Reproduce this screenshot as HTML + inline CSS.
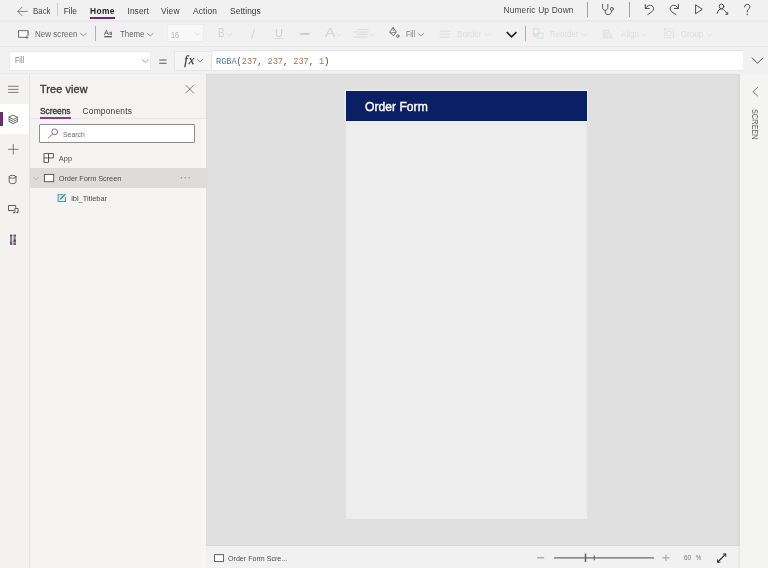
<!DOCTYPE html>
<html><head><meta charset="utf-8"><title>Power Apps</title>
<style>
html,body{margin:0;padding:0;}
body{width:768px;height:568px;overflow:hidden;position:relative;background:#f3f2f1;font-family:"Liberation Sans",sans-serif;}
.a{position:absolute;}
.t{position:absolute;white-space:nowrap;}
svg{position:absolute;overflow:visible;}

</style></head>
<body>
<!-- menu bar -->
<div class="a" style="left:0;top:0;width:768px;height:20px;background:#f1f1f1;"></div>
<div class="a" style="left:0;top:18px;width:768px;height:2px;background:#f3f3f3;"></div>
<div class="a" style="left:0;top:20px;width:768px;height:2px;background:#e9e9e9;"></div>
<!-- toolbar -->
<div class="a" style="left:0;top:22px;width:768px;height:24px;background:#f1f1f1;"></div>
<div class="a" style="left:0;top:46px;width:768px;height:1.3px;background:#e8e8e8;"></div>
<!-- formula bar -->
<div class="a" style="left:0;top:47.3px;width:768px;height:26.7px;background:#f1f1f1;"></div>
<div class="a" style="left:0;top:73px;width:206px;height:1px;background:#ebebea;"></div>
<!-- left rail -->
<div class="a" style="left:0;top:74px;width:29px;height:494px;background:#f3f2f1;"></div>
<div class="a" style="left:29px;top:74px;width:1px;height:494px;background:#e3e2e1;"></div>
<div class="a" style="left:0;top:104px;width:29px;height:30px;background:#ffffff;"></div>
<div class="a" style="left:0.4px;top:112px;width:2.6px;height:14.2px;background:#6b2f70;"></div>
<!-- tree view panel -->
<div class="a" style="left:30px;top:74px;width:176px;height:494px;background:#f4f3f2;"></div>
<div class="a" style="left:30px;top:118px;width:176px;height:1px;background:#e8e7e6;"></div>
<div class="a" style="left:201px;top:119px;width:5px;height:449px;background:#f7f6f5;"></div>
<div class="a" style="left:40px;top:117.3px;width:31px;height:1.3px;background:#863f8a;"></div>
<div class="a" style="left:39px;top:124px;width:156px;height:19px;box-sizing:border-box;border:1px solid #8f8d8b;background:#fff;border-radius:1px;"></div>
<div class="a" style="left:30px;top:168px;width:176px;height:19.7px;background:#dddcdb;"></div>
<!-- canvas -->
<div class="a" style="left:206px;top:74px;width:534px;height:472px;background:#e0e0e0;"></div>
<div class="a" style="left:206px;top:74px;width:534px;height:1px;background:#dbdbdb;"></div>
<div class="a" style="left:206px;top:75px;width:1px;height:470px;background:#dcdcdc;"></div>
<div class="a" style="left:346px;top:91px;width:241px;height:428px;background:#ededed;"></div>
<div class="a" style="left:346px;top:91px;width:241px;height:30px;background:#0b1f65;box-shadow:0 0 0 1.3px rgba(236,238,247,0.85);"></div>
<!-- bottom bar -->
<div class="a" style="left:206px;top:546px;width:534px;height:22px;background:#f1f1f1;"></div>
<div class="a" style="left:206px;top:545px;width:534px;height:1px;background:#d6d6d6;"></div>
<div class="a" style="left:737.6px;top:75px;width:2.4px;height:470px;background:#dadada;"></div>
<div class="a" style="left:737.6px;top:546px;width:2.4px;height:22px;background:#e7e7e7;"></div>
<!-- right rail -->
<div class="a" style="left:740px;top:74px;width:28px;height:494px;background:#f4f4f3;"></div>
<!-- formula inputs -->
<div class="a" style="left:8.6px;top:50.6px;width:142.2px;height:20.2px;background:#fff;box-sizing:border-box;border:1px solid #eaeaea;"></div>
<div class="a" style="left:174.3px;top:50.6px;width:37.4px;height:20.2px;background:#f5f5f5;box-sizing:border-box;border:1px solid #e6e6e6;"></div>
<div class="a" style="left:212px;top:50px;width:531px;height:20.6px;background:#fff;box-sizing:border-box;border-top:1px solid #e2e4e7;border-bottom:1.1px solid #e7e7e7;"></div>
<!-- font size box -->
<div class="a" style="left:166.5px;top:24.3px;width:37.8px;height:18.2px;background:#f8f8f8;box-sizing:border-box;border:1px solid #ececec;"></div>
<!-- home underline -->
<div class="a" style="left:90px;top:17px;width:24.5px;height:2px;background:#742774;"></div>
<!-- separators -->
<div class="a" style="left:57px;top:3px;width:1px;height:13px;background:#d0d0d0;"></div>
<div class="a" style="left:587px;top:2px;width:1px;height:15px;background:#a0a0a0;"></div>
<div class="a" style="left:629px;top:2px;width:1px;height:15px;background:#a0a0a0;"></div>
<div class="a" style="left:95px;top:26px;width:1px;height:15px;background:#b0b0b0;"></div>
<div class="a" style="left:525px;top:26px;width:1px;height:15px;background:#b0b0b0;"></div>
<!-- formula text -->
<span class="a" style="left:215.7px;top:55px;font-family:'Liberation Mono',monospace;font-size:8.58px;line-height:14px;white-space:pre;color:#4a4846;will-change:transform;"><span style="color:#5079ab">RGBA</span>(<span style="color:#a8704a">237</span>, <span style="color:#a8704a">237</span>, <span style="color:#a8704a">237</span>, <span style="color:#a8704a">1</span>)</span>
<!-- right rail vertical label -->
<span class="a" id="scr" style="left:758.6px;top:109.2px;font-size:8.4px;line-height:9px;color:#605e5c;white-space:nowrap;transform-origin:0 0;transform:rotate(90deg) scaleX(0.88);will-change:transform;">SCREEN</span>
<!-- icons overlay -->
<svg width="768" height="568" viewBox="0 0 768 568" style="left:0;top:0;" fill="none" stroke-linecap="round" stroke-linejoin="round">
  <!-- back arrow -->
  <path d="M27.4 11.4H17.9M22 7.2L17.8 11.4L22 15.6" stroke="#6a6866" stroke-width="0.8"/>
  <!-- stethoscope -->
  <g stroke="#4a4846" stroke-width="0.85">
    <path d="M602.6 4.3V7.6C602.6 9.3 603.8 10.3 605.2 10.3C606.6 10.3 607.8 9.3 607.8 7.6V4.3"/>
    <path d="M605.2 10.3V12.1C605.2 13.7 606.5 14.6 608 14.6C609.9 14.6 611.7 13.3 611.7 10.6"/>
    <circle cx="611.9" cy="8.9" r="1.5"/>
  </g>
  <!-- undo -->
  <g stroke="#3b3a39" stroke-width="0.9">
    <path d="M645.3 4.6V8.5H649.2"/>
    <path d="M645.6 8.2C647.4 5.2 650.3 4.6 652.2 6C654.4 7.7 653.7 10.4 651.6 12C650.2 13.1 648.8 14 647.8 14.5"/>
  </g>
  <!-- redo -->
  <g stroke="#3b3a39" stroke-width="0.9">
    <path d="M678.4 4.6V8.5H674.5"/>
    <path d="M678.1 8.2C676.3 5.2 673.4 4.6 671.5 6C669.3 7.7 670 10.4 672.1 12C673.5 13.1 674.9 14 675.9 14.5"/>
  </g>
  <!-- play -->
  <path d="M695.6 5.2V13.8L702 9.5Z" stroke="#3b3a39" stroke-width="0.9"/>
  <!-- person share -->
  <g stroke="#3b3a39" stroke-width="0.9">
    <circle cx="721.5" cy="6.4" r="2.3"/>
    <path d="M717.3 13.2C717.7 10.6 719.4 8.9 721.5 8.9C723.3 8.9 724.6 10 727.3 13.9"/>
    <path d="M727.7 12.5V14.4H725.8" stroke-width="0.8"/>
  </g>
  <!-- question mark -->
  <path d="M744.6 6.9C744.6 5.2 745.8 4.3 747.2 4.3C748.7 4.3 749.8 5.3 749.8 6.8C749.8 9 747.2 9.2 747.2 11.9M747.2 13.9V14.8" stroke="#3b3a39" stroke-width="0.9"/>

  <!-- new screen icon -->
  <g stroke="#5a5856" stroke-width="0.9" stroke-linejoin="miter">
    <rect x="18.6" y="30.7" width="9.4" height="6.6" fill="#ffffff" stroke="none"/>
    <path d="M25.4 37.3H18.6V30.7H28V35.2"/>
    <path d="M28 35.2V30.7" stroke="#8a8886" stroke-width="0.7"/>
    <path d="M26.8 36V38.6M25.6 37.3H28.2" stroke-width="0.8"/>
  </g>
  <!-- chevrons (active) -->
  <g stroke="#7a7876" stroke-width="0.75">
    <path d="M80.5 33.5L83.3 35.9L86.1 33.5"/>
    <path d="M147.5 33.5L150.3 35.9L153.1 33.5"/>
    <path d="M418.1 33.5L420.9 35.9L423.7 33.5"/>
  </g>
  <!-- chevrons (disabled) -->
  <g stroke="#dddcda" stroke-width="0.75">
    <path d="M194.8 32.6L197.5 35.1L200.2 32.6" stroke="#e0dfdd"/>
    <path d="M226.5 33.5L229.1 35.9L231.7 33.5"/>
    <path d="M336.7 33.5L339.3 35.9L341.9 33.5"/>
    <path d="M369.5 33.5L372.0 35.9L374.5 33.5"/>
    <path d="M484.5 33.5L487.2 35.9L489.9 33.5"/>
    <path d="M581.7 33.5L584.4 35.9L587.1 33.5"/>
    <path d="M641.7 33.5L644.4 35.9L647.1 33.5"/>
    <path d="M706.7 33.5L709.4 35.9L712.1 33.5"/>
  </g>
  <!-- theme icon -->
  <g stroke="#5a5856" stroke-width="0.8">
    <path d="M104.5 34.6L106.4 30.2L108.3 34.6M105.2 33.2H107.6"/>
    <path d="M111.4 32.1V34.6M111.4 33.4C111.4 31.9 109.3 31.9 109.3 33.4C109.3 34.9 111.4 34.9 111.4 33.4"/>
    <path d="M104.3 36.7H111.9" stroke-width="1.3" stroke-linecap="butt"/>
  </g>
  <!-- italic slash -->
  <path d="M254.6 29.2L251.6 38.4" stroke="#d2d1cf" stroke-width="0.9"/>
  <!-- underline for U, strike, align lines -->
  <g stroke="#d6d5d3">
    <path d="M275.2 38.6H283" stroke-width="0.8"/>
    <path d="M300 33.9H309.6" stroke="#c4c3c1" stroke-width="1.5" stroke-linecap="butt"/>
    <path d="M357 29.6H368M353.8 32H368.2M357 34.4H367.4M353.8 37H367" stroke-width="0.8"/>
  </g>
  <!-- fill bucket -->
  <g stroke="#5a5856" stroke-width="0.8">
    <path d="M393.2 27.8L396.2 31.9L393.7 35.7L389.9 32.6Z"/>
    <path d="M390.4 32.9L396 32.1" stroke-width="0.7"/>
    <path d="M393.2 27.8V30.4" stroke-width="0.7"/>
    <ellipse cx="397.8" cy="36.1" rx="1.1" ry="1.4"/>
  </g>
  <!-- border icon -->
  <g stroke="#dddcda" stroke-width="0.9">
    <path d="M440 31.2H449.6M440 34.1H449.6M440 37H449.6"/>
  </g>
  <!-- big chevron -->
  <path d="M506.8 32.2L511.6 36.8L516.4 32.2" stroke="#252423" stroke-width="1.7" stroke-linecap="butt" stroke-linejoin="miter"/>
  <!-- reorder -->
  <g stroke="#c9dfd0" stroke-width="0.8">
    <rect x="533.8" y="28.8" width="5.2" height="5.2"/>
    <rect x="538" y="33" width="5.2" height="5.2"/>
    <path d="M536.4 36.4H534.4V34.6" stroke="#cfcecc"/>
  </g>
  <!-- align icon -->
  <g stroke="#dedddb" stroke-width="0.8">
    <path d="M603.2 29.4V38"/>
    <path d="M603.2 37.8H613.2"/>
    <rect x="605" y="30.4" width="3.4" height="2.4"/>
    <rect x="605" y="34" width="6.6" height="2.4"/>
  </g>
  <!-- group icon -->
  <g stroke="#dedddb" stroke-width="0.8">
    <rect x="664.6" y="29" width="8.8" height="8.8" stroke-dasharray="1.6 1.2"/>
    <rect x="667" y="31.4" width="4" height="4"/>
  </g>

  <!-- formula bar: dropdown chevron, equals, fx chevron, expand chevron -->
  <path d="M142.4 59.6L145.2 62.4L148 59.6" stroke="#7a7876" stroke-width="0.75"/>
  <path d="M159.2 60H166.6M159.2 63.2H166.6" stroke="#5a5856" stroke-width="1.15" stroke-linecap="butt"/>
  <path d="M197.4 59.2L200.1 61.9L202.8 59.2" stroke="#5a5856" stroke-width="0.75"/>
  <path d="M752.2 58L757.5 63.3L762.8 58" stroke="#3b3a39" stroke-width="0.9"/>

  <!-- left rail: hamburger -->
  <path d="M8.1 86.3H18.5M8.1 89.4H18.5M8.1 92.4H18.5" stroke="#605e5c" stroke-width="0.8" stroke-linecap="butt"/>
  <!-- layers -->
  <g stroke="#504e4a" stroke-width="0.85">
    <path d="M13.3 115.2L17.5 117.3L13.3 119.4L9.1 117.3Z"/>
    <path d="M9.1 119.4L13.3 121.5L17.5 119.4"/>
    <path d="M9.1 121.5L13.3 123.6L17.5 121.5"/>
    <path d="M9.1 117.3V121.5M17.5 117.3V121.5" stroke-width="0.6"/>
  </g>
  <!-- plus -->
  <path d="M8.1 149.3H18.5M13.3 144.1V154.5" stroke="#605e5c" stroke-width="0.8" stroke-linecap="butt"/>
  <!-- cylinder -->
  <g stroke="#504e4a" stroke-width="0.85">
    <ellipse cx="12.6" cy="176.8" rx="3.4" ry="1.5"/>
    <path d="M9.2 176.8V182C9.2 183 10.7 183.6 12.6 183.6C14.5 183.6 16 183 16 182V176.8"/>
  </g>
  <!-- media -->
  <g stroke="#504e4a" stroke-width="0.9" stroke-linejoin="miter">
    <path d="M13.6 210.5H8.5V205.5H15.7V207.4"/>
    <path d="M14.9 212.2V208.5H18.1V212"/>
    <circle cx="14" cy="212.6" r="0.85" fill="#504e4a" stroke="none"/>
    <circle cx="17.3" cy="212.4" r="0.85" fill="#504e4a" stroke="none"/>
  </g>
  <!-- advanced tools -->
  <g stroke="none">
    <rect x="10" y="234.7" width="2.2" height="10.3" fill="#8f8290"/>
    <rect x="13.6" y="234.7" width="2.2" height="10.3" fill="#8f8290"/>
    <rect x="10" y="234.7" width="2.2" height="1.6" fill="#5e4c5f"/>
    <rect x="13.6" y="234.7" width="2.2" height="1.6" fill="#5e4c5f"/>
    <rect x="10" y="241.6" width="2.2" height="3.2" fill="#6a596b"/>
    <rect x="13.6" y="239.6" width="2.2" height="2.2" fill="#4f3e50"/>
    <rect x="13.6" y="243" width="2.2" height="2" fill="#6a596b"/>
  </g>

  <!-- tree view close X -->
  <path d="M185.9 85.3L193.5 92.9M193.5 85.3L185.9 92.9" stroke="#6e6c6a" stroke-width="0.85"/>
  <!-- search icon -->
  <g stroke="#8a4a8a" stroke-width="0.85">
    <circle cx="54.7" cy="131.8" r="2.9"/>
    <path d="M52.6 134L48.4 137.8"/>
  </g>
  <!-- app icon -->
  <g stroke="#3b3a39" stroke-width="0.85" stroke-linejoin="miter">
    <path d="M44.4 153.6H53.4V157.9H48.5V162.4H44.4Z" fill="#ffffff"/>
    <path d="M48.5 153.6V157.9M44.4 157.9H48.5"/>
  </g>
  <!-- tree chevron -->
  <path d="M33.7 177.4L36 179.8L38.3 177.4" stroke="#a5a4a2" stroke-width="0.75"/>
  <!-- screen icon -->
  <rect x="44.4" y="174.4" width="9.3" height="7.3" fill="#ffffff" stroke="#4a4846" stroke-width="0.85" stroke-linejoin="miter"/>
  <!-- dots -->
  <g fill="#4a4846" stroke="none">
    <circle cx="181.3" cy="177.7" r="0.5"/><circle cx="185.2" cy="177.7" r="0.5"/><circle cx="189.1" cy="177.7" r="0.5"/>
  </g>
  <!-- label icon -->
  <rect x="58.1" y="194.7" width="7.4" height="6.8" fill="#d6efef" stroke="#5f8a8c" stroke-width="0.95" stroke-linejoin="miter"/>
  <path d="M65 194.6L60.3 199.2" stroke="#3c9aa3" stroke-width="1.2" stroke-linecap="butt"/>
  <path d="M63.2 194.7H65.5V196.9" stroke="#f4f3f2" stroke-width="0.9" stroke-linecap="butt"/>
  <path d="M65.4 194.2L60.3 199.2" stroke="#3c9aa3" stroke-width="1.1" stroke-linecap="butt"/>

  <!-- right rail chevron -->
  <path d="M757.6 87.4L752.9 91.7L757.6 96" stroke="#605e5c" stroke-width="0.8"/>

  <!-- bottom bar -->
  <rect x="214.6" y="554.7" width="9" height="6.7" fill="#ffffff" stroke="#4a4846" stroke-width="0.85" stroke-linejoin="miter"/>
  <g stroke="#605e5c" stroke-linecap="butt">
    <path d="M537 557.8H544.2" stroke-width="0.8" stroke="#767472"/>
    <path d="M554 557.8H654" stroke-width="1.3" stroke="#6a6866"/>
    <path d="M585.5 553.6V562" stroke-width="1.5"/>
    <path d="M594.3 555.4V560.2" stroke-width="1.1"/>
    <path d="M662.2 557.8H669.6M665.9 554.5V561.1" stroke-width="0.75" stroke="#8a8886"/>
  </g>
  <g stroke="#252423">
    <path d="M717.8 562L725.6 554.2" stroke-width="1.1"/>
    <path d="M723.4 554H725.8V556.4M717.6 559.8V562.2H720" stroke-width="0.9"/>
  </g>
</svg>

<!-- text -->
<div id="txt" style="position:absolute;left:0;top:0;width:768px;height:568px;will-change:transform;">
<span class="t" id="t0" style="left:33.00px;top:5.18px;font-size:8.40px;line-height:13.44px;color:#4a4a4a;font-weight:400;font-family:'Liberation Sans', sans-serif;transform-origin:0 50%;transform:scaleX(0.9396);">Back</span>
<span class="t" id="t1" style="left:63.80px;top:5.18px;font-size:8.40px;line-height:13.44px;color:#3a3a3a;font-weight:400;font-family:'Liberation Sans', sans-serif;letter-spacing:-0.100px;">File</span>
<span class="t" id="t2" style="left:90.00px;top:5.18px;font-size:8.40px;line-height:13.44px;color:#201f1e;font-weight:700;font-family:'Liberation Sans', sans-serif;letter-spacing:0.406px;">Home</span>
<span class="t" id="t3" style="left:127.50px;top:5.18px;font-size:8.40px;line-height:13.44px;color:#3a3a3a;font-weight:400;font-family:'Liberation Sans', sans-serif;letter-spacing:0.069px;">Insert</span>
<span class="t" id="t4" style="left:161.00px;top:5.18px;font-size:8.40px;line-height:13.44px;color:#3a3a3a;font-weight:400;font-family:'Liberation Sans', sans-serif;letter-spacing:0.161px;">View</span>
<span class="t" id="t5" style="left:193.00px;top:5.18px;font-size:8.40px;line-height:13.44px;color:#3a3a3a;font-weight:400;font-family:'Liberation Sans', sans-serif;letter-spacing:0.144px;">Action</span>
<span class="t" id="t6" style="left:230.00px;top:5.18px;font-size:8.40px;line-height:13.44px;color:#3a3a3a;font-weight:400;font-family:'Liberation Sans', sans-serif;letter-spacing:0.076px;">Settings</span>
<span class="t" id="t7" style="left:503.50px;top:4.48px;font-size:8.40px;line-height:13.44px;color:#484644;font-weight:400;font-family:'Liberation Sans', sans-serif;letter-spacing:0.146px;">Numeric Up Down</span>
<span class="t" id="t8" style="left:34.50px;top:28.28px;font-size:8.40px;line-height:13.44px;color:#6a6866;font-weight:400;font-family:'Liberation Sans', sans-serif;transform-origin:0 50%;transform:scaleX(0.9611);">New screen</span>
<span class="t" id="t9" style="left:120.00px;top:28.28px;font-size:8.40px;line-height:13.44px;color:#6a6866;font-weight:400;font-family:'Liberation Sans', sans-serif;transform-origin:0 50%;transform:scaleX(0.9395);">Theme</span>
<span class="t" id="t10" style="left:171.20px;top:28.64px;font-size:8.20px;line-height:13.12px;color:#b4b3b1;font-weight:400;font-family:'Liberation Sans', sans-serif;transform-origin:0 50%;transform:scaleX(0.8782);">16</span>
<span class="t" id="t11" style="left:217.60px;top:24.48px;font-size:11.90px;line-height:19.04px;color:#d4d3d1;font-weight:400;font-family:'Liberation Sans', sans-serif;transform-origin:0 50%;transform:scaleX(0.8441);">B</span>
<span class="t" id="t12" style="left:275.00px;top:24.48px;font-size:11.40px;line-height:18.24px;color:#d4d3d1;font-weight:400;font-family:'Liberation Sans', sans-serif;transform-origin:0 50%;transform:scaleX(0.9715);">U</span>
<span class="t" id="t13" style="left:325.20px;top:21.82px;font-size:13.60px;line-height:21.76px;color:#d4d3d1;font-weight:400;font-family:'Liberation Sans', sans-serif;transform-origin:0 50%;transform:scaleX(1.1236);">A</span>
<span class="t" id="t14" style="left:406.20px;top:27.68px;font-size:8.40px;line-height:13.44px;color:#7a7876;font-weight:400;font-family:'Liberation Sans', sans-serif;transform-origin:0 50%;transform:scaleX(0.8409);">Fill</span>
<span class="t" id="t15" style="left:456.50px;top:28.28px;font-size:8.40px;line-height:13.44px;color:#dfdedc;font-weight:400;font-family:'Liberation Sans', sans-serif;transform-origin:0 50%;transform:scaleX(0.9745);">Border</span>
<span class="t" id="t16" style="left:549.50px;top:28.28px;font-size:8.40px;line-height:13.44px;color:#dfdedc;font-weight:400;font-family:'Liberation Sans', sans-serif;transform-origin:0 50%;transform:scaleX(0.9417);">Reorder</span>
<span class="t" id="t17" style="left:620.50px;top:28.28px;font-size:8.40px;line-height:13.44px;color:#dfdedc;font-weight:400;font-family:'Liberation Sans', sans-serif;transform-origin:0 50%;transform:scaleX(0.9664);">Align</span>
<span class="t" id="t18" style="left:680.50px;top:28.28px;font-size:8.40px;line-height:13.44px;color:#dfdedc;font-weight:400;font-family:'Liberation Sans', sans-serif;letter-spacing:-0.070px;">Group</span>
<span class="t" id="t19" style="left:15.40px;top:54.18px;font-size:8.40px;line-height:13.44px;color:#7f7d7b;font-weight:400;font-family:'Liberation Sans', sans-serif;transform-origin:0 50%;transform:scaleX(0.8502);">Fill</span>
<span class="t" id="t20" style="left:184.20px;top:50.20px;font-size:12.50px;line-height:20.00px;color:#3b3a39;font-weight:400;font-family:'Liberation Serif', serif;letter-spacing:0.969px;font-style:italic;-webkit-text-stroke:0.25px #3b3a39;">fx</span>
<span class="t" id="t21" style="left:40.00px;top:80.96px;font-size:10.80px;line-height:17.28px;color:#3b3a39;font-weight:400;font-family:'Liberation Sans', sans-serif;letter-spacing:0.137px;-webkit-text-stroke:0.35px #3b3a39;">Tree view</span>
<span class="t" id="t22" style="left:40.00px;top:104.78px;font-size:8.40px;line-height:13.44px;color:#323130;font-weight:400;font-family:'Liberation Sans', sans-serif;letter-spacing:-0.039px;-webkit-text-stroke:0.3px #323130;">Screens</span>
<span class="t" id="t23" style="left:82.50px;top:104.78px;font-size:8.40px;line-height:13.44px;color:#3a3a3a;font-weight:400;font-family:'Liberation Sans', sans-serif;letter-spacing:0.222px;">Components</span>
<span class="t" id="t24" style="left:63.00px;top:128.50px;font-size:7.50px;line-height:12.00px;color:#6a6866;font-weight:400;font-family:'Liberation Sans', sans-serif;transform-origin:0 50%;transform:scaleX(0.9173);">Search</span>
<span class="t" id="t25" style="left:58.80px;top:153.28px;font-size:7.40px;line-height:11.84px;color:#4a4a4a;font-weight:400;font-family:'Liberation Sans', sans-serif;letter-spacing:0.022px;">App</span>
<span class="t" id="t26" style="left:58.80px;top:173.28px;font-size:7.40px;line-height:11.84px;color:#4a4a4a;font-weight:400;font-family:'Liberation Sans', sans-serif;letter-spacing:-0.073px;">Order Form Screen</span>
<span class="t" id="t27" style="left:71.20px;top:193.28px;font-size:7.40px;line-height:11.84px;color:#4a4a4a;font-weight:400;font-family:'Liberation Sans', sans-serif;letter-spacing:-0.007px;">lbl_Titlebar</span>
<span class="t" id="t28" style="left:364.70px;top:96.52px;font-size:12.60px;line-height:20.16px;color:#ffffff;font-weight:400;font-family:'Liberation Sans', sans-serif;transform-origin:0 50%;transform:scaleX(0.9650);-webkit-text-stroke:0.4px #ffffff;">Order Form</span>
<span class="t" id="t29" style="left:227.80px;top:552.88px;font-size:7.40px;line-height:11.84px;color:#4a4a4a;font-weight:400;font-family:'Liberation Sans', sans-serif;transform-origin:0 50%;transform:scaleX(0.9609);">Order Form Scre...</span>
<span class="t" id="t30" style="left:683.60px;top:552.38px;font-size:7.40px;line-height:11.84px;color:#7a7876;font-weight:400;font-family:'Liberation Sans', sans-serif;transform-origin:0 50%;transform:scaleX(0.8744);">60</span>
<span class="t" id="t31" style="left:696.20px;top:552.38px;font-size:7.40px;line-height:11.84px;color:#7a7876;font-weight:400;font-family:'Liberation Sans', sans-serif;transform-origin:0 50%;transform:scaleX(0.7905);">%</span>
</div>
</body></html>
